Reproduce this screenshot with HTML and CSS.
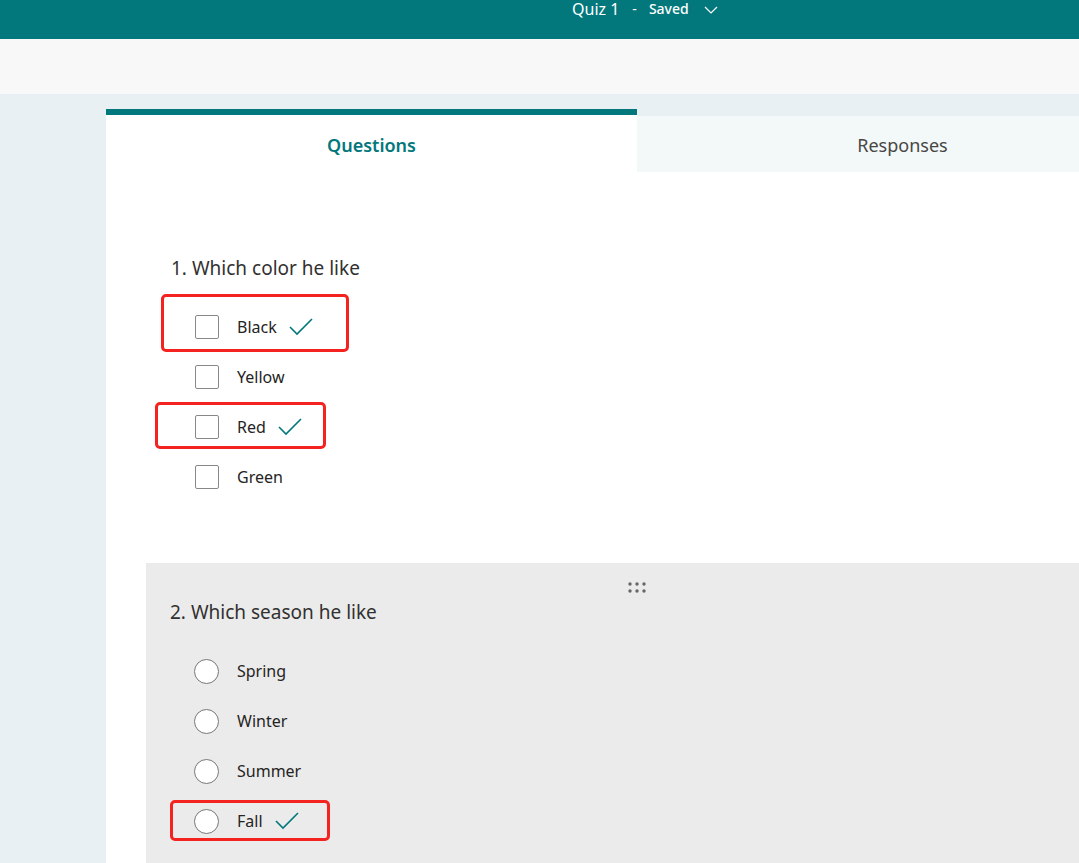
FILE: index.html
```html
<!DOCTYPE html>
<html>
<head>
<meta charset="utf-8">
<link rel="stylesheet" href="styles.css">
</head>
<body>
<header class="topbar">
  <div class="title">
    <span class="quiz-name">Quiz 1</span>
    <span class="sep">-</span>
    <span class="saved">Saved</span>
    <svg class="chev" width="14" height="8" viewBox="0 0 14 8"><polyline points="1,1 7,7 13,1" fill="none" stroke="#fff" stroke-width="1.2"/></svg>
  </div>
</header>
<div class="toolbar"></div>
<main class="page">
  <section class="card">
    <nav class="tabs">
      <div class="tab tab-active">Questions</div>
      <div class="tab tab-inactive">Responses</div>
    </nav>

    <div class="question q1">
      <div class="q-title">1. Which color he like</div>
      <ul class="options">
        <li class="option">
          <span class="box"></span><span class="label">Black</span>
          <svg class="tick" width="24" height="18" viewBox="0 0 24 18"><polyline points="1,9 8,16 23,1" fill="none" stroke="#03787c" stroke-width="1.6"/></svg>
          <span class="mark mark-black"></span>
        </li>
        <li class="option"><span class="box"></span><span class="label">Yellow</span></li>
        <li class="option">
          <span class="box"></span><span class="label">Red</span>
          <svg class="tick" width="24" height="18" viewBox="0 0 24 18"><polyline points="1,9 8,16 23,1" fill="none" stroke="#03787c" stroke-width="1.6"/></svg>
          <span class="mark mark-red"></span>
        </li>
        <li class="option"><span class="box"></span><span class="label">Green</span></li>
      </ul>
    </div>

    <div class="question q2">
      <span class="drag">
        <svg width="20" height="14" viewBox="0 0 20 14">
          <circle cx="3" cy="3" r="1.7" fill="#666"/><circle cx="10" cy="3" r="1.7" fill="#666"/><circle cx="17" cy="3" r="1.7" fill="#666"/>
          <circle cx="3" cy="10" r="1.7" fill="#666"/><circle cx="10" cy="10" r="1.7" fill="#666"/><circle cx="17" cy="10" r="1.7" fill="#666"/>
        </svg>
      </span>
      <div class="q-title">2. Which season he like</div>
      <ul class="options">
        <li class="option"><span class="radio"></span><span class="label">Spring</span></li>
        <li class="option"><span class="radio"></span><span class="label">Winter</span></li>
        <li class="option"><span class="radio"></span><span class="label">Summer</span></li>
        <li class="option">
          <span class="radio"></span><span class="label">Fall</span>
          <svg class="tick" width="24" height="18" viewBox="0 0 24 18"><polyline points="1,9 8,16 23,1" fill="none" stroke="#03787c" stroke-width="1.6"/></svg>
          <span class="mark mark-fall"></span>
        </li>
      </ul>
    </div>
  </section>
</main>
</body>
</html>
```

FILE: styles.css
```css
* { box-sizing: border-box; }
html, body {
  margin: 0;
  padding: 0;
  height: 100%;
  overflow: hidden;
}
body {
  background: #e8f0f3;
  font-family: "Noto Sans", "Open Sans", sans-serif;
  color: #252423;
}
.topbar {
  height: 39px;
  background: #03787c;
  color: #fff;
}
.title {
  display: flex;
  align-items: center;
  height: 18px;
  line-height: 18px;
  padding-left: 572px;
}
.quiz-name {
  font-size: 16px;
}
.sep {
  font-size: 14px;
  margin: 0 12px 0 13px;
}
.saved {
  font-size: 14px;
  font-weight: 500;
}
.chev {
  margin-left: 15px;
  margin-top: 2px;
}
.toolbar {
  height: 55px;
  background: #f8f8f8;
}
.page {
  padding: 15px 0 0 106px;
}
.card {
  background: #fff;
  width: 1062px;
  height: 800px;
}
.tabs {
  display: grid;
  grid-template-columns: 531px 531px;
  background: #e8f0f3;
  height: 63px;
}
.tab {
  display: flex;
  align-items: center;
  justify-content: center;
  font-size: 18px;
}
.tab-active {
  background: #fff;
  border-top: 6px solid #03787c;
  color: #03787c;
  font-weight: 600;
  padding-top: 3px;
}
.tab-inactive {
  margin-top: 7px;
  background: #f3f8f9;
  color: #484644;
  padding-top: 1px;
}
.question {
  position: relative;
}
.q1 {
  padding: 84px 0 0 65px;
}
.q2 {
  margin: 61px 0 0 40px;
  padding: 37px 0 0 24px;
  background: #ebebeb;
  height: 320px;
}
.q-title {
  font-size: 19px;
  line-height: 24px;
  color: #323130;
  margin-bottom: 22px;
}
.options {
  list-style: none;
  margin: 0;
  padding: 0;
}
.option {
  position: relative;
  display: flex;
  align-items: center;
  height: 50px;
  padding-left: 24px;
  font-size: 16px;
}
.box {
  width: 24px;
  height: 24px;
  border: 1px solid #8a8886;
  border-radius: 2px;
  background: #fff;
}
.radio {
  width: 25px;
  height: 25px;
  border: 1px solid #797775;
  border-radius: 50%;
  background: #fff;
}
.label {
  margin-left: 18px;
  color: #252423;
}
.tick {
  margin-left: 12px;
}
.mark {
  position: absolute;
  border: 3px solid #f4231f;
  border-radius: 5px;
}
.mark-black {
  left: -10px;
  top: -8px;
  width: 188px;
  height: 58px;
}
.mark-red {
  left: -16px;
  top: 0;
  width: 171px;
  height: 47px;
}
.mark-fall {
  left: 0;
  top: 4px;
  width: 160px;
  height: 41px;
}
.drag {
  position: absolute;
  left: 481px;
  top: 18px;
  line-height: 0;
}
```
